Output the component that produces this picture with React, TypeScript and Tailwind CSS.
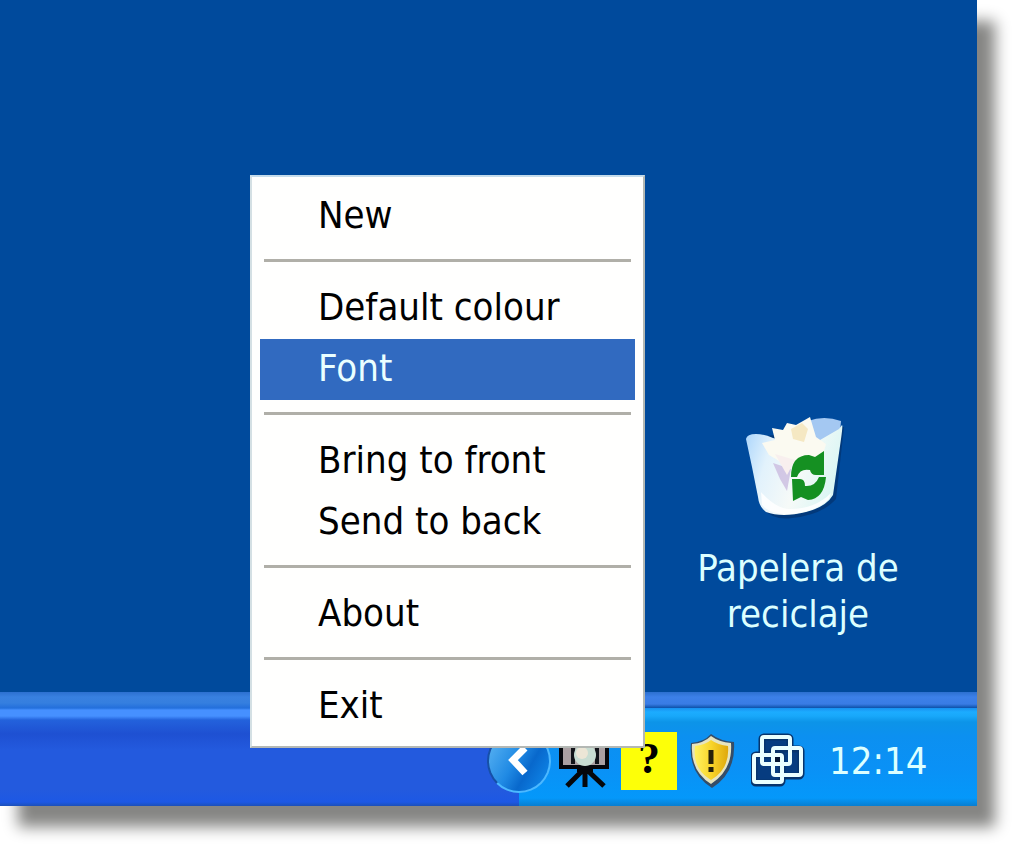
import { Fragment } from 'react';

const MENU_GROUPS = [
  ['New'],
  ['Default colour', 'Font'],
  ['Bring to front', 'Send to back'],
  ['About'],
  ['Exit'],
];

function RecycleBinIcon() {
  return (
    <svg viewBox="0 2 100 106" className="w-[100px] h-[106px]" aria-hidden="true">
      <defs>
        <linearGradient id="bin" x1="0" y1="0" x2="1" y2="0.3">
          <stop offset="0" stopColor="#a8d4fc" />
          <stop offset="0.3" stopColor="#e2f2fc" />
          <stop offset="0.65" stopColor="#f6faf8" />
          <stop offset="1" stopColor="#dcf6f4" />
        </linearGradient>
      </defs>
      <path d="M5 25 L18 95 Q30 108 48 105 Q78 102 92 86 L100 14Z" fill="#032f66" opacity="0.6" />
      <path d="M64 8 Q80 2 97 8 L94 42 L68 38Z" fill="#a4c8f2" />
      <path d="M2 26 Q3 21 12 21 Q20 21 29 25 L64 34 L95 16 L98 12 Q99 12 97 26 L89 82 Q82 94 62 99 Q38 105 22 99 Q15 94 14 84 L8 54Z" fill="url(#bin)" />
      <path d="M18 30 L31 27 L28 15 L39 17 L43 10 L52 12 L66 4 L72 24 L82 31 L78 45 L42 52 L25 42Z" fill="#fbfaf1" />
      <path d="M47 16 L58 10 L64 16 L60 29 L49 26Z" fill="#f5e8c3" />
      <path d="M29 50 L47 56 L43 78 L36 66Z" fill="#cbbce0" opacity="0.8" />
      <path d="M31 41 L51 47 L43 62Z" fill="#f8efee" />
      <path d="M17 79 Q32 96 46 96 Q71 96 87 80 L85 86 Q74 98 48 101 Q26 102 18 92Z" fill="#ffffff" opacity="0.85" />
      <path d="M47 64 Q47 42 65 42 L71 44 L80 38 L80 62 L72 62 Q67 62 66 57 Q56 55 53 64Z" fill="#159022" />
      <path d="M82 64 Q80 86 64 87 L57 84 L49 88 L48 66 L56 66 Q61 66 61 73 Q71 74 75 64Z" fill="#159022" />
    </svg>
  );
}

function PresentationIcon() {
  return (
    <svg viewBox="0 0 50 54" className="w-[50px] h-[54px]" aria-hidden="true">
      <rect x="2" y="4" width="46" height="29" fill="#aaa0a2" stroke="#05070c" strokeWidth="4" />
      <path d="M14 14v16M38 14v16" stroke="#111318" strokeWidth="4" />
      <circle cx="26" cy="21" r="11" fill="#c8ddd2" />
      <circle cx="23" cy="19" r="6" fill="#ece6d6" />
      <path d="M18 33h16v5h-16z" fill="#05070c" />
      <path d="M26 34v19M24 36L8 52M28 36L45 52" stroke="#05070c" strokeWidth="5" fill="none" />
    </svg>
  );
}

function ShieldIcon() {
  return (
    <svg viewBox="0 0 46 56" className="w-[46px] h-[56px]" aria-hidden="true">
      <defs>
        <linearGradient id="shield" x1="0" y1="0" x2="1" y2="0">
          <stop offset="0" stopColor="#fff260" />
          <stop offset="0.5" stopColor="#f8d42a" />
          <stop offset="1" stopColor="#dfa80c" />
        </linearGradient>
      </defs>
      <path d="M22 1 Q31 8 45 9 Q47 40 23 55 Q-1 40 2 10 Q15 9 22 1Z" fill="#354d68" />
      <path d="M22 3 Q30 9 42 10 Q44 37 22 51 Q1 38 3 11 Q15 10 22 3Z" fill="#e6e4c0" />
      <path d="M22 7 Q29 12 39 13 Q41 36 22 47 Q3 36 6 13 Q16 12 22 7Z" fill="url(#shield)" />
      <path d="M22 17v14M22 34v5" stroke="#25200a" strokeWidth="5" />
    </svg>
  );
}

function WindowsIcon() {
  return (
    <svg viewBox="0 0 54 56" className="w-[54px] h-[56px]" aria-hidden="true">
      <g fill="#063c80" stroke="#07346c" strokeWidth="7">
        <rect x="11" y="4" width="28" height="27" rx="2" />
        <rect x="22" y="16" width="28" height="27" rx="2" />
        <rect x="3" y="22" width="28" height="28" rx="2" />
      </g>
      <path d="M22 22h9v9h-9z" fill="#031634" />
      <g fill="none" stroke="#eaffff" strokeWidth="4">
        <rect x="11" y="4" width="28" height="27" rx="2" />
        <rect x="22" y="15" width="28" height="27" rx="2" />
        <rect x="3" y="22" width="28" height="27" rx="2" />
      </g>
    </svg>
  );
}

function ContextMenu() {
  return (
    <div
      role="menu"
      className="absolute right-[332px] bottom-[58px] z-10 w-[395px] border-2 border-[#b4b8b4] border-t-[#c4dcec] border-l-[#d4e0e4] bg-[#fffffe] px-2 py-[9px]"
    >
      {MENU_GROUPS.map((group, idx) => (
        <Fragment key={group[0]}>
          {idx > 0 && <hr className="mx-1 mt-3 mb-4 border-t-3 border-[#b0afa8]" />}
          {group.map((label) => (
            <button
              key={label}
              role="menuitem"
              className={`block h-[61px] w-full pb-1 pl-[58px] text-left ${
                label === 'Font' ? 'bg-[#316ac0] text-[#eaffff]' : 'text-black'
              }`}
            >
              {label}
            </button>
          ))}
        </Fragment>
      ))}
    </div>
  );
}

function Taskbar() {
  return (
    <footer className="flex h-[114px] justify-end bg-[linear-gradient(#2c70d0_0px,#3880e0_5px,#357fdf_11px,#236fdc_16px,#4690ff_18px,#4690ff_24px,#2362dc_28px,#1e50d2_42px,#235ade_58px,#235ade_98px,#1d58e4_110px,#1c50b8_114px)]">
      <div className="flex w-[458px] flex-col">
        <div className="h-4 bg-[linear-gradient(#2c70d0,#3c80e8_5px,#397ce5_12px,#0c50a8)]" />
        <div className="flex flex-1 items-center bg-[linear-gradient(#1890f0_0px,#1cacff_4px,#18a8fa_8px,#0c94e8_14px,#0c90f0_28px,#0a91f6_60px,#0498fa_90px,#087ed0_98px)] pt-2 text-[#dcffff]">
          <button
            aria-label="Show hidden icons"
            className="-ml-8 flex size-16 items-center justify-center rounded-full border-2 border-[#4cb8ff] border-l-[#1650a8] bg-[linear-gradient(120deg,#61b8f4,#208ae4_45%,#0868cc_65%,#108ef0)]"
          >
            <svg viewBox="0 0 24 32" className="h-8 w-6" aria-hidden="true">
              <path d="M18 3L6 15L18 28" fill="none" stroke="#ffffff" strokeWidth="7" />
            </svg>
          </button>
          <div className="ml-2">
            <PresentationIcon />
          </div>
          <span className="ml-3 flex h-[58px] w-[56px] items-center justify-center bg-[#fdff08] pb-1 font-['Liberation_Serif',serif] text-[44px] font-bold text-black">
            ?
          </span>
          <div className="ml-3">
            <ShieldIcon />
          </div>
          <div className="ml-4">
            <WindowsIcon />
          </div>
          <time className="ml-6">12:14</time>
        </div>
      </div>
    </footer>
  );
}

export default function App() {
  return (
    <div className="flex h-screen overflow-hidden bg-white pr-[43px] pb-[43px] font-['DejaVu_Sans_Condensed','DejaVu_Sans',sans-serif] text-[38px] leading-[46px]">
      <div className="relative flex flex-1 flex-col bg-[#004a9c] shadow-[18px_21px_14px_#868684]">
        <main className="flex-1">
          <button className="absolute right-[69px] bottom-[169px] flex w-[220px] flex-col items-center text-[#dcffff]">
            <span className="pr-2">
              <RecycleBinIcon />
            </span>
            <span className="mt-6">Papelera de reciclaje</span>
          </button>
        </main>
        <Taskbar />
        <ContextMenu />
      </div>
    </div>
  );
}
